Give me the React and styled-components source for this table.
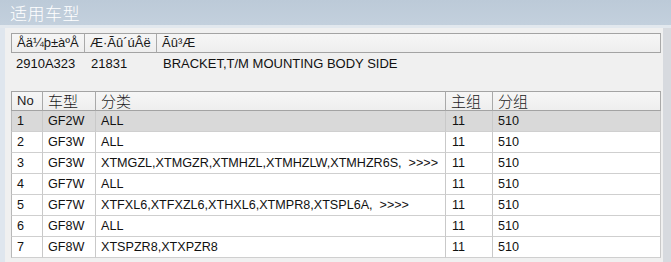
import React from "react";
import styled, { createGlobalStyle } from "styled-components";

const Global = createGlobalStyle`
  html, body { margin: 0; padding: 0; }
  body {
    width: 671px; height: 262px; overflow: hidden;
    background: #dfe6ee;
    font-family: Arial, "Liberation Sans", "Noto Sans CJK SC", sans-serif;
  }
`;

const Window = styled.div`
  width: 671px;
  height: 262px;
  display: flex;
  flex-direction: column;
`;

const TitleBar = styled.div`
  height: 25px;
  flex: none;
  padding-left: 10px;
  background: linear-gradient(#bccad8, #c3d0dd);
  color: #ffffff;
  font-family: "Noto Sans CJK SC", sans-serif;
  font-weight: 300;
  font-size: 17px;
  line-height: 25px;
  letter-spacing: 0.5px;
`;

const Strip = styled.div`
  height: 3px;
  flex: none;
  background: #e2e8ee;
`;

const Frame = styled.div`
  flex: 1;
  display: flex;
  min-height: 0;
`;

const Edge = styled.div`
  flex: none;
  width: ${(p) => p.$w}px;
  background: ${(p) => p.$bg};
`;

const Panel = styled.div`
  flex: 1;
  background: #f0f0f0;
  padding: 5px 2px 0 6px;
  display: flex;
  flex-direction: column;
  overflow: hidden;
`;

const Grid = styled.div`
  display: grid;
  grid-template-columns: ${(p) => p.$cols};
  width: 650px;
`;

const HeadCell = styled.div`
  height: 18px;
  border-top: 1px solid #a3a3a3;
  border-bottom: 1px solid #a3a3a3;
  border-right: 1px solid #a9a9a9;
  border-left: ${(p) => (p.$first ? "1px solid #a3a3a3" : "none")};
  background: linear-gradient(#f6f6f6, #eeeeee);
  padding-left: ${(p) => p.$pl ?? 5}px;
  font-size: ${(p) => (p.$cjk ? "15px" : "13px")};
  font-weight: ${(p) => (p.$cjk ? 300 : 400)};
  font-family: ${(p) =>
    p.$cjk
      ? '"Noto Sans CJK SC", sans-serif'
      : 'Arial, "Liberation Sans", sans-serif'};
  line-height: 18px;
  color: #1a1a1a;
  white-space: nowrap;
  overflow: hidden;
`;

const InfoCell = styled.div`
  height: 22px;
  padding-left: ${(p) => p.$pl ?? 5}px;
  font-size: 13px;
  line-height: 22px;
  color: #111;
  white-space: nowrap;
`;

const BodyCell = styled.div`
  height: 20px;
  background: ${(p) => (p.$sel ? "#d9d9d9" : "#ffffff")};
  border-bottom: 1px solid #cfcfcf;
  border-right: 1px solid #c9c9c9;
  border-left: ${(p) => (p.$first ? "1px solid #b8b8b8" : "none")};
  padding-left: ${(p) => p.$pl ?? 5}px;
  font-size: 12.6px;
  line-height: 21px;
  color: #111;
  white-space: nowrap;
  overflow: hidden;
`;

const Gap = styled.div`
  height: 16px;
  flex: none;
`;

const infoCols = "74px 72px 1fr";
const listCols = "32px 53px 350px 47px 1fr";

const rows = [
  ["1", "GF2W", "ALL", "11", "510"],
  ["2", "GF3W", "ALL", "11", "510"],
  ["3", "GF3W", "XTMGZL,XTMGZR,XTMHZL,XTMHZLW,XTMHZR6S,\u00a0\u00a0>>>>", "11", "510"],
  ["4", "GF7W", "ALL", "11", "510"],
  ["5", "GF7W", "XTFXL6,XTFXZL6,XTHXL6,XTMPR8,XTSPL6A,\u00a0\u00a0>>>>", "11", "510"],
  ["6", "GF8W", "ALL", "11", "510"],
  ["7", "GF8W", "XTSPZR8,XTXPZR8", "11", "510"],
];

const pads = [5, 5, 5, 6, 5];

export default function App() {
  return (
    <Window>
      <Global />
      <TitleBar>适用车型</TitleBar>
      <Strip />
      <Frame>
        <Edge $w={5} $bg="#dfe6ee" />
        <Panel>
          <Grid $cols={infoCols}>
            <HeadCell $first>Åä¼þ±àºÅ</HeadCell>
            <HeadCell>Æ·Ãû´úÂë</HeadCell>
            <HeadCell>Ãû³Æ</HeadCell>
            <InfoCell>2910A323</InfoCell>
            <InfoCell $pl={6}>21831</InfoCell>
            <InfoCell $pl={6}>BRACKET,T/M MOUNTING BODY SIDE</InfoCell>
          </Grid>
          <Gap />
          <Grid $cols={listCols}>
            <HeadCell $first>No</HeadCell>
            <HeadCell $cjk>车型</HeadCell>
            <HeadCell $cjk>分类</HeadCell>
            <HeadCell $cjk>主组</HeadCell>
            <HeadCell $cjk>分组</HeadCell>
            {rows.map((r, i) =>
              r.map((c, j) => (
                <BodyCell key={`${i}-${j}`} $first={j === 0} $sel={i === 0} $pl={pads[j]}>
                  {c}
                </BodyCell>
              ))
            )}
          </Grid>
        </Panel>
        <Edge $w={8} $bg="#d7dadf" />
      </Frame>
    </Window>
  );
}
